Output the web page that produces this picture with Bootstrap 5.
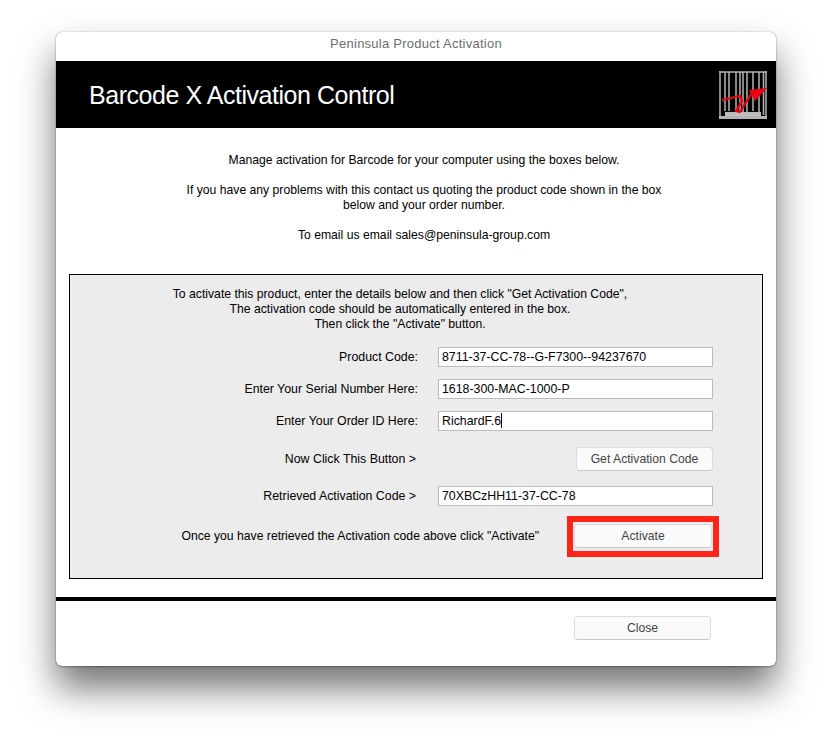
<!DOCTYPE html>
<html lang="en">
<head>
    <meta charset="UTF-8">
    <meta name="viewport" content="width=device-width, initial-scale=1.0">
    <title>Peninsula Product Activation</title>
    <link href="https://cdn.jsdelivr.net/npm/bootstrap@5.3.3/dist/css/bootstrap.min.css" rel="stylesheet">
    <script defer src="https://cdn.jsdelivr.net/npm/bootstrap@5.3.3/dist/js/bootstrap.bundle.min.js"></script>
    <style>
        html, body {
            height: 100%;
        }

        body {
            background-color: #fff;
            font-family: "Liberation Sans", Arial, sans-serif;
            font-size: 12.2px;
            line-height: 15px;
            color: #000;
            padding: 32px 0 0 56px;
            min-height: 746px;
        }

        .app-window {
            width: 720px;
            height: 634px;
            background: #fff;
            border-radius: 6px;
            box-shadow: 0 0 1px rgba(0, 0, 0, 0.5), 0 1px 2px rgba(0, 0, 0, 0.3), 0 22px 36px rgba(0, 0, 0, 0.55);
            overflow: hidden;
        }

        .title-bar {
            height: 29px;
            padding-top: 4px;
            color: #6e6e6e;
            font-size: 13px;
            text-align: center;
            letter-spacing: 0.25px;
        }

        .brand-bar {
            height: 67px;
            background: #000;
            color: #fff;
            padding: 0 9px 0 33px;
        }

        .brand-bar h1 {
            font-size: 25px;
            line-height: 1;
            margin: 2px 0 0;
            font-weight: 400;
            letter-spacing: -0.46px;
        }

        .intro {
            height: 146px;
            padding-top: 25px;
            margin-left: 16px;
            text-align: center;
        }

        .intro p {
            margin: 0 0 15px;
        }

        .activation-panel {
            width: 694px;
            height: 305px;
            margin-left: 13px;
            background: #ececec;
            border: 1px solid #000;
            padding-top: 12px;
        }

        .panel-text {
            width: 660px;
            text-align: center;
            margin-bottom: 15px;
        }

        .form-line {
            display: flex;
            align-items: center;
            height: 20px;
            margin-bottom: 12px;
        }

        .form-line label {
            width: 349px;
            padding-right: 1px;
            font-size: 12.35px;
            text-align: right;
            margin: 0;
        }

        .form-line label.arrow-label {
            padding-right: 3px;
        }

        .button-line {
            margin-top: 18px;
            margin-bottom: 17px;
        }

        .last-line {
            margin-bottom: 10px;
        }

        .plain-input {
            width: 275px;
            height: 20px;
            margin-left: 19px;
            border: 1px solid #bcbcbc;
            background: #fff;
            padding: 0 3px;
            font-size: 12.35px;
            line-height: 19px;
            white-space: nowrap;
        }

        .caret-bar {
            display: inline-block;
            width: 1px;
            height: 15px;
            background: #000;
            vertical-align: -3px;
        }

        .mac-btn {
            height: 24px;
            padding: 0;
            font-size: 12.2px;
            line-height: 20px;
            color: #444;
            background: #fafafa;
            border: 1px solid #dcdcdc;
            border-bottom-color: #c8c8c8;
            border-radius: 4px;
        }

        .activate-label {
            width: 469px;
            text-align: right;
            margin: 0;
        }

        .activate-frame {
            width: 152px;
            height: 41px;
            border: 6px solid #ff2318;
            margin-left: 28px;
        }

        .activate-frame .mac-btn {
            width: 138px;
            display: block;
            margin: 2px 0 0 1px;
        }

        .heavy-rule {
            height: 4px;
            background: #000;
            margin-top: 18px;
        }

        .get-btn {
            width: 137px;
            margin-left: 157px;
        }

        .close-btn {
            width: 137px;
            display: block;
            margin: 15px 0 0 518px;
        }
    </style>
</head>
<body>

    <div class="app-window">
        <div class="title-bar">Peninsula Product Activation</div>

        <div class="brand-bar d-flex align-items-center justify-content-between">
            <h1>Barcode X Activation Control</h1>
            <!-- barcode logo -->
            <svg width="48" height="48" viewBox="0 0 48 48">
                <path d="M0 1H48M1 0V48M6 1V40M10 1V40M17 1V40M21 1V44M24 1V44M28 1V44M34 1V40M40 1V44M44.500 1V44M47 0V48" stroke="#b4b4b4" stroke-width="1.5" fill="none"/>
                <rect x="6" y="41" width="36" height="4" fill="#bdbdbd"/>
                <rect x="0" y="45" width="48" height="3" fill="#b4b4b4"/>
                <path d="M3 29L21 25L23 30L17 40L21 41L29 28L34 20" stroke="#f00010" stroke-width="2.2" fill="none"/>
                <path d="M30 19L48 17L36 30Z" fill="#f00010"/>
            </svg>
        </div>

        <div class="intro">
            <p>Manage activation for Barcode for your computer using the boxes below.</p>
            <p>If you have any problems with this contact us quoting the product code shown in the box<br>below and your order number.</p>
            <p>To email us email sales@peninsula-group.com</p>
        </div>

        <div class="activation-panel">
            <div class="panel-text">
                To activate this product, enter the details below and then click "Get Activation Code",<br>
                The activation code should be automatically entered in the box.<br>
                Then click the "Activate" button.
            </div>

            <div class="form-line">
                <label>Product Code:</label>
                <div class="plain-input">8711-37-CC-78--G-F7300--94237670</div>
            </div>
            <div class="form-line">
                <label>Enter Your Serial Number Here:</label>
                <div class="plain-input">1618-300-MAC-1000-P</div>
            </div>
            <div class="form-line">
                <label>Enter Your Order ID Here:</label>
                <div class="plain-input">RichardF.6<span class="caret-bar"></span></div>
            </div>

            <div class="form-line button-line">
                <label class="arrow-label">Now Click This Button &gt;</label>
                <button type="button" class="mac-btn get-btn">Get Activation Code</button>
            </div>

            <div class="form-line last-line">
                <label class="arrow-label">Retrieved Activation Code &gt;</label>
                <div class="plain-input">70XBCzHH11-37-CC-78</div>
            </div>

            <div class="d-flex align-items-center">
                <label class="activate-label">Once you have retrieved the Activation code above click "Activate"</label>
                <div class="activate-frame">
                    <button type="button" class="mac-btn">Activate</button>
                </div>
            </div>
        </div>

        <div class="heavy-rule"></div>
        <button type="button" class="mac-btn close-btn">Close</button>
    </div>

</body>
</html>
